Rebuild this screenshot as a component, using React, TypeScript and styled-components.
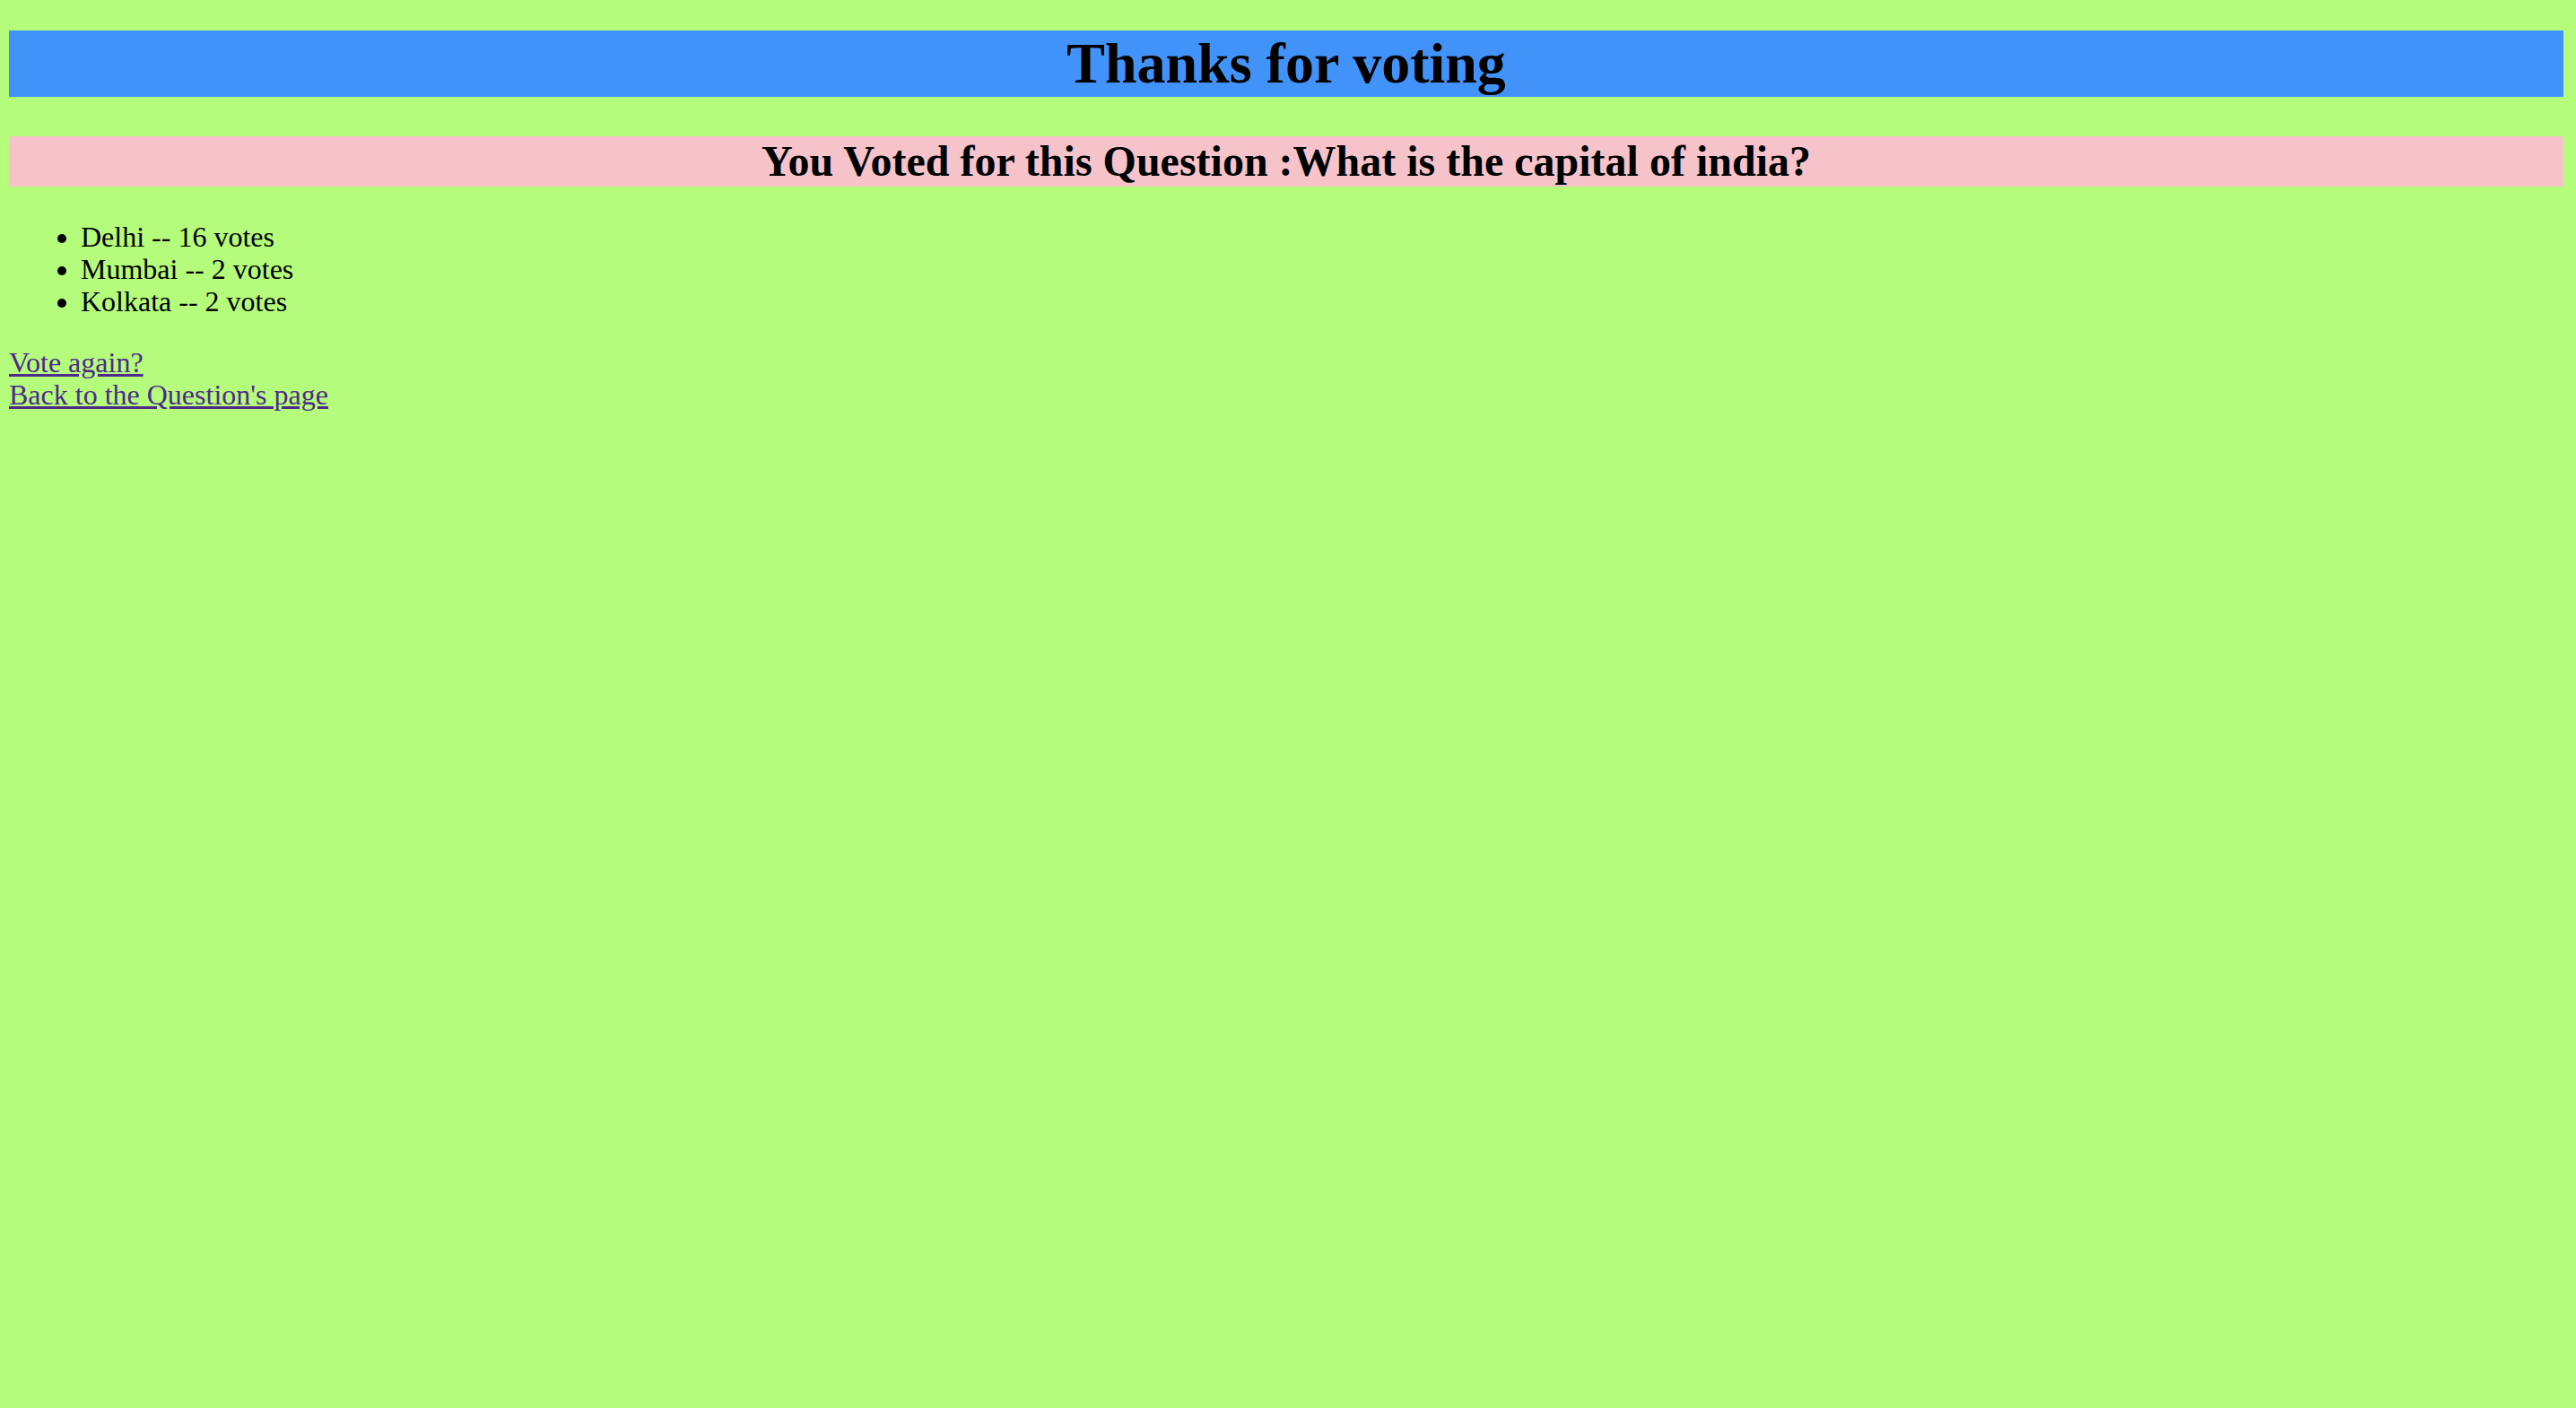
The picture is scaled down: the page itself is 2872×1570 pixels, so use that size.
import React from 'react';
import styled, { createGlobalStyle } from 'styled-components';

const GlobalStyle = createGlobalStyle`
  html {
    background: #b5fc7c;
  }

  body {
    margin: 0 14px 0 10px;
    padding: 1px 0 0;
    font-family: "Liberation Serif", "Times New Roman", serif;
    color: #000;
  }
`;

const Title = styled.h1`
  margin: 33px 0 44px;
  background: #4193f9;
  font-size: 64px;
  line-height: 74px;
  font-weight: bold;
  text-align: center;
`;

const Question = styled.h2`
  margin: 0 0 38px;
  background: #f6c3cb;
  font-size: 48px;
  line-height: 56px;
  font-weight: bold;
  text-align: center;
`;

const Results = styled.ul`
  margin: 0 0 32px;
  padding-left: 80px;
  font-size: 32px;
  line-height: 36px;
`;

const Links = styled.div`
  font-size: 32px;
  line-height: 36px;
`;

const NavLink = styled.a`
  color: #4f2a8a;
  text-decoration: underline;
`;

interface Choice {
  name: string;
  votes: number;
}

const choices: Choice[] = [
  { name: 'Delhi', votes: 16 },
  { name: 'Mumbai', votes: 2 },
  { name: 'Kolkata', votes: 2 }
];

function App (): React.ReactElement {
  return (
    <>
      <GlobalStyle />
      <Title>Thanks for voting</Title>
      <Question>You Voted for this Question :What is the capital of india?</Question>
      <Results>
        {choices.map((choice) => (
          <li key={choice.name}>{choice.name} -- {choice.votes} votes</li>
        ))}
      </Results>
      <Links>
        <NavLink href='#vote'>Vote again?</NavLink>
        <br />
        <NavLink href='#questions'>Back to the Question's page</NavLink>
      </Links>
    </>
  );
}

export default App;
